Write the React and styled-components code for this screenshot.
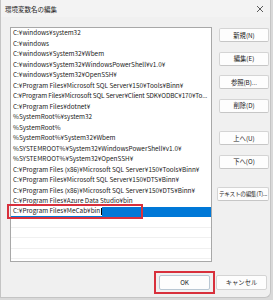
import React from 'react';
import styled, { createGlobalStyle } from 'styled-components';

const GlobalStyle = createGlobalStyle`
    html, body {
        margin: 0;
        padding: 0;
        background: #d9d9d9;
    }
    * {
        box-sizing: border-box;
    }
`

const Window = styled.div`
    width: 271px;
    height: 298px;
    background-color: #f0f0f0;
    border-left: 1px solid #c4c4c4;
    border-right: 1px solid #c4c4c4;
    border-bottom: 1px solid #c4c4c4;
    border-bottom-right-radius: 6px;
    display: flex;
    flex-direction: column;
    font-family: "Noto Sans CJK JP", "Noto Sans", sans-serif;
    color: #1b1b1b;
    overflow: hidden;
`
const TitleBar = styled.div`
    height: 17px;
    display: flex;
    align-items: center;
    justify-content: space-between;
    padding: 0 6px 0 4px;
    background-color: #f3f3f3;
    font-size: 6.5px;
`
const Close = styled.div`
    width: 8px;
    height: 8px;
    display: flex;
`
const Body = styled.div`
    display: flex;
    gap: 7px;
    padding: 10px 0 0 9px;
`
const List = styled.div`
    width: 202px;
    height: 235px;
    border: 1px solid #a8a8a8;
    background-color: #ffffff;
    display: flex;
    flex-direction: column;
`
const Row = styled.div`
    position: relative;
    height: 10.5px;
    line-height: 10.5px;
    flex-shrink: 0;
    font-size: 6.4px;
    letter-spacing: ${props => props.$tight ? "-0.12px" : "0"};
    padding: 0 1px 0 ${props => props.$editing ? "0" : "2px"};
    white-space: nowrap;
    overflow: ${props => props.$editing ? "visible" : "hidden"};
    border-bottom: 1px solid ${props => props.$empty ? "#f0f0f0" : "transparent"};
    background-color: ${props => props.$editing ? "#0078d7" : "transparent"};
`
const EditBox = styled.span`
    display: inline-flex;
    align-items: center;
    width: 91px;
    height: 100%;
    padding-left: 2px;
    background-color: #ffffff;
    vertical-align: top;
`
const Caret = styled.span`
    display: inline-block;
    width: 1px;
    height: 7px;
    margin-left: 1px;
    background-color: #000;
`
const Mark = styled.div`
    position: absolute;
    left: -4px;
    top: -2.5px;
    width: 136px;
    height: 15px;
    border: 2px solid #d8303c;
    pointer-events: none;
`
const Side = styled.div`
    width: 50px;
    padding-top: 1px;
    display: flex;
    flex-direction: column;
`
const Button = styled.div`
    width: ${props => props.$wide ? "52px" : "50px"};
    margin-left: ${props => props.$wide ? "-2px" : "0"};
    height: 14px;
    margin-top: ${props => props.$space}px;
    display: flex;
    align-items: center;
    justify-content: center;
    background-color: #fdfdfd;
    border: 1px solid #d4d4d4;
    border-bottom-color: #c6c6c6;
    border-radius: 2px;
    font-size: ${props => props.$wide ? "5.6px" : "6.3px"};
    letter-spacing: ${props => props.$wide ? "-0.2px" : "0"};
    white-space: nowrap;
    flex-shrink: 0;
`
const Footer = styled.div`
    display: flex;
    justify-content: flex-end;
    gap: 6px;
    padding: 13px 3px 0 0;
`
const Marked = styled.div`
    position: relative;
    &::after {
        content: "";
        position: absolute;
        inset: -4px -5px;
        border: 2px solid #d8303c;
    }
`
const FooterButton = styled(Button)`
    width: 51px;
    height: 15px;
    border-color: ${props => props.$default ? "#b9c7d3" : "#d4d4d4"};
`

const paths = [
    "C:¥windows¥system32",
    "C:¥windows",
    "C:¥windows¥System32¥Wbem",
    "C:¥windows¥System32¥WindowsPowerShell¥v1.0¥",
    "C:¥windows¥System32¥OpenSSH¥",
    "C:¥Program Files¥Microsoft SQL Server¥150¥Tools¥Binn¥",
    "C:¥Program Files¥Microsoft SQL Server¥Client SDK¥ODBC¥170¥To...",
    "C:¥Program Files¥dotnet¥",
    "%SystemRoot%¥system32",
    "%SystemRoot%",
    "%SystemRoot%¥System32¥Wbem",
    "%SYSTEMROOT%¥System32¥WindowsPowerShell¥v1.0¥",
    "%SYSTEMROOT%¥System32¥OpenSSH¥",
    "C:¥Program Files (x86)¥Microsoft SQL Server¥150¥Tools¥Binn¥",
    "C:¥Program Files¥Microsoft SQL Server¥150¥DTS¥Binn¥",
    "C:¥Program Files (x86)¥Microsoft SQL Server¥150¥DTS¥Binn¥",
    "C:¥Program Files¥Azure Data Studio¥bin",
]

const sideButtons = [
    { label: "新規(N)", space: 0 },
    { label: "編集(E)", space: 9.5 },
    { label: "参照(B)...", space: 9.5 },
    { label: "削除(D)", space: 9.5 },
    { label: "上へ(U)", space: 18.5 },
    { label: "下へ(O)", space: 9.5 },
    { label: "テキストの編集(T)...", space: 18.5, wide: true },
]

const App = () => {
  return (
    <>
      <GlobalStyle />
      <Window>
        <TitleBar>
          <span>環境変数名の編集</span>
          <Close>
            <svg width="8" height="8" viewBox="0 0 8 8">
              <path d="M1 1L7 7M7 1L1 7" stroke="#333" strokeWidth="0.8" />
            </svg>
          </Close>
        </TitleBar>
        <Body>
          <List>
            {paths.map((p) => (
              <Row key={p} $tight={p.length > 60}>{p}</Row>
            ))}
            <Row $editing>
              <EditBox>C:¥Program Files¥MeCab¥bin<Caret /></EditBox>
              <Mark />
            </Row>
            {[0, 1, 2, 3].map((i) => (
              <Row key={"empty" + i} $empty />
            ))}
          </List>
          <Side>
            {sideButtons.map((b) => (
              <Button key={b.label} $space={b.space} $wide={b.wide}>{b.label}</Button>
            ))}
          </Side>
        </Body>
        <Footer>
          <Marked>
            <FooterButton $space={0} $default>OK</FooterButton>
          </Marked>
          <FooterButton $space={0}>キャンセル</FooterButton>
        </Footer>
      </Window>
    </>
  )
}

export default App
